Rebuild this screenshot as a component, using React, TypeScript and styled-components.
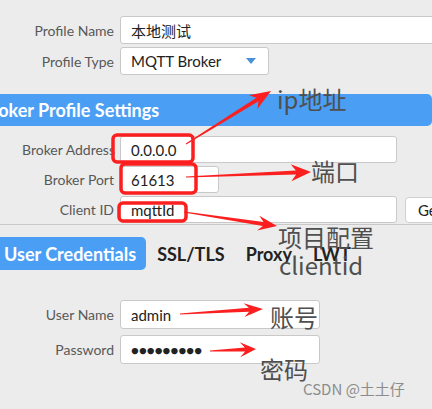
import React from 'react';
import styled, { createGlobalStyle } from 'styled-components';

const GlobalStyle = createGlobalStyle`
  html, body {
    margin: 0;
    padding: 0;
    background: #ececec;
    overflow: hidden;
  }
  body {
    font-family: Lato, "Noto Sans", "Noto Sans CJK SC", sans-serif;
  }
`;

const Page = styled.div`
  position: relative;
  width: 432px;
  height: 409px;
  overflow: hidden;
  background: #ececec;
`;

const Form = styled.div<{ $top: number; $gap: number }>`
  display: flex;
  flex-direction: column;
  gap: ${(p) => p.$gap}px;
  margin-top: ${(p) => p.$top}px;
`;

const Row = styled.div`
  display: flex;
  align-items: center;
`;

const Label = styled.div`
  box-sizing: border-box;
  width: 98px;
  margin-left: 22px;
  padding-right: 6px;
  flex-shrink: 0;
  text-align: right;
  white-space: nowrap;
  overflow: hidden;
  font-size: 14px;
  color: #585858;
`;

const TextBox = styled.div<{ $width: number; $height: number }>`
  box-sizing: border-box;
  flex-shrink: 0;
  width: ${(p) => p.$width}px;
  height: ${(p) => p.$height}px;
  display: flex;
  align-items: center;
  padding: 0 10px;
  background: #fff;
  border: 1px solid #c9c9c9;
  border-radius: 3px;
  font-size: 15px;
  color: #222;
  white-space: nowrap;
`;

const Select = styled(TextBox)`
  justify-content: space-between;
`;

const Caret = styled.span`
  width: 0;
  height: 0;
  border-left: 5px solid transparent;
  border-right: 5px solid transparent;
  border-top: 6px solid #4a90d9;
  margin-right: 2px;
`;

const Dots = styled.span`
  font-size: 13px;
  letter-spacing: 0.1px;
  color: #222;
`;

const SideButton = styled.div`
  box-sizing: border-box;
  flex-shrink: 0;
  margin-left: 8px;
  height: 26px;
  padding: 0 12px;
  display: flex;
  align-items: center;
  background: #fff;
  border: 1px solid #cfcfcf;
  border-radius: 4px;
  font-size: 15px;
  color: #222;
`;

const SectionTag = styled.div<{ $top: number; $left: number; $height: number; $pad: number }>`
  align-self: flex-start;
  flex-shrink: 0;
  margin-top: ${(p) => p.$top}px;
  margin-left: ${(p) => p.$left}px;
  height: ${(p) => p.$height}px;
  padding: 0 ${(p) => p.$pad}px;
  display: flex;
  align-items: center;
  background: #4a9ff5;
  border-radius: 5px;
  color: #fff;
  font-size: 18px;
  font-weight: 700;
  white-space: nowrap;
`;

const Divider = styled.div`
  margin-top: 1px;
  height: 1px;
  background: #c8c8c8;
`;

const TabBar = styled.div`
  display: flex;
  align-items: center;
  margin-top: 12px;
`;

const Tab = styled.div<{ $space: number }>`
  margin-left: ${(p) => p.$space}px;
  font-size: 18px;
  font-weight: 700;
  color: #222;
`;

const Overlay = styled.svg`
  position: absolute;
  left: 0;
  top: 0;
  pointer-events: none;
`;

const Note = styled.div<{ $x: number; $y: number }>`
  position: absolute;
  left: ${(p) => p.$x}px;
  top: ${(p) => p.$y}px;
  font-family: "Noto Sans CJK SC", "Noto Sans", sans-serif;
  font-size: 24px;
  line-height: 1;
  color: #4f4f4f;
  white-space: nowrap;
`;

const Watermark = styled(Note)`
  font-size: 15px;
  color: #8c8c8c;
`;

const RED = '#fb1f1f';

// tapered arrow, thin at the tail, barbed head at the tip
function arrowPoints(x1: number, y1: number, x2: number, y2: number, head = 20, headW = 16, shaft = 4) {
  const dx = x2 - x1;
  const dy = y2 - y1;
  const len = Math.hypot(dx, dy);
  const ux = dx / len;
  const uy = dy / len;
  const nx = -uy;
  const ny = ux;
  const bx = x2 - ux * head;
  const by = y2 - uy * head;
  const jx = bx + ux * 5;
  const jy = by + uy * 5;
  const pts = [
    [x1 + nx * 0.5, y1 + ny * 0.5],
    [jx + (nx * shaft) / 2, jy + (ny * shaft) / 2],
    [bx + (nx * headW) / 2, by + (ny * headW) / 2],
    [x2, y2],
    [bx - (nx * headW) / 2, by - (ny * headW) / 2],
    [jx - (nx * shaft) / 2, jy - (ny * shaft) / 2],
    [x1 - nx * 0.5, y1 - ny * 0.5],
  ];
  return pts.map(([x, y]) => `${x.toFixed(1)},${y.toFixed(1)}`).join(' ');
}

const boxes = [
  { x: 113, y: 135, w: 80, h: 27 },
  { x: 121, y: 164, w: 75, h: 29 },
  { x: 119, y: 203, w: 67, h: 18 },
];

const arrows = [
  { x1: 186, y1: 144, x2: 271, y2: 91, head: 21, headW: 16 },
  { x1: 186, y1: 177, x2: 311, y2: 172, head: 20, headW: 17 },
  { x1: 184, y1: 212, x2: 277, y2: 226, head: 19, headW: 15 },
  { x1: 180, y1: 314, x2: 263, y2: 309, head: 19, headW: 14 },
  { x1: 210, y1: 351, x2: 256, y2: 349, head: 16, headW: 15 },
];

const notes = [
  { text: 'ip地址', x: 277, y: 87 },
  { text: '端口', x: 311, y: 159 },
  { text: '项目配置', x: 278, y: 225 },
  { text: 'clientid', x: 279, y: 253 },
  { text: '账号', x: 270, y: 305 },
  { text: '密码', x: 260, y: 357 },
];

const tabs = ['SSL/TLS', 'Proxy', 'LWT'];

const App: React.FC = () => {
  return (
    <Page>
      <GlobalStyle />
      <Form $top={16} $gap={3}>
        <Row>
          <Label>Profile Name</Label>
          <TextBox $width={330} $height={28}>本地测试</TextBox>
        </Row>
        <Row>
          <Label>Profile Type</Label>
          <Select $width={149} $height={28}>
            MQTT Broker
            <Caret />
          </Select>
        </Row>
      </Form>

      <SectionTag $top={19} $left={-28} $height={32} $pad={8}>Broker Profile Settings</SectionTag>

      <Form $top={10} $gap={3}>
        <Row>
          <Label>Broker Address</Label>
          <TextBox $width={277} $height={27}>0.0.0.0</TextBox>
        </Row>
        <Row>
          <Label>Broker Port</Label>
          <TextBox $width={99} $height={27}>61613</TextBox>
        </Row>
        <Row>
          <Label>Client ID</Label>
          <TextBox $width={277} $height={27}>mqttId</TextBox>
          <SideButton>Generate</SideButton>
        </Row>
      </Form>

      <Divider />

      <TabBar>
        <SectionTag $top={0} $left={-6} $height={33} $pad={10}>User Credentials</SectionTag>
        {tabs.map((t, i) => (
          <Tab key={t} $space={i === 0 ? 11 : 21}>
            {t}
          </Tab>
        ))}
      </TabBar>

      <Form $top={30} $gap={6}>
        <Row>
          <Label>User Name</Label>
          <TextBox $width={200} $height={29}>admin</TextBox>
        </Row>
        <Row>
          <Label>Password</Label>
          <TextBox $width={200} $height={29}>
            <Dots>●●●●●●●●●</Dots>
          </TextBox>
        </Row>
      </Form>

      <Overlay width={432} height={409} viewBox="0 0 432 409">
        {boxes.map((b, i) => (
          <rect key={i} x={b.x} y={b.y} width={b.w} height={b.h} rx={4} fill="none" stroke={RED} strokeWidth={3.5} />
        ))}
        {arrows.map((a, i) => (
          <polygon key={i} points={arrowPoints(a.x1, a.y1, a.x2, a.y2, a.head, a.headW)} fill={RED} />
        ))}
      </Overlay>

      {notes.map((n) => (
        <Note key={n.text} $x={n.x} $y={n.y}>
          {n.text}
        </Note>
      ))}
      <Watermark $x={303} $y={381}>CSDN @土土仔</Watermark>
    </Page>
  );
};

export default App;
